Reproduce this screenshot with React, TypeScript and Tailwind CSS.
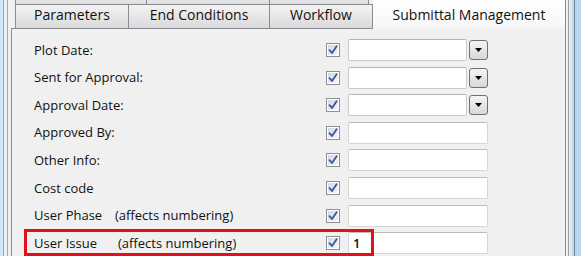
import React from "react";

const font = { fontFamily: '"Open Sans", "Noto Sans", sans-serif' };

function Check() {
  return (
    <div className="w-[14px] h-[14px] border border-[#8e8f8f] bg-white p-[1px] shrink-0">
      <div className="w-full h-full bg-gradient-to-br from-[#cfd8e6] to-[#f4f6fa] flex items-center justify-center">
        <svg width="10" height="10" viewBox="0 0 10 10">
          <path d="M1.5 5.2 L4 8 L8.6 1.2" fill="none" stroke="#3d5496" strokeWidth="1.8" strokeLinecap="round" strokeLinejoin="round" />
        </svg>
      </div>
    </div>
  );
}

function DropBtn() {
  return (
    <div className="w-[19px] h-[20px] rounded-[3px] border border-[#707070] bg-gradient-to-b from-[#f4f4f4] to-[#d8d8d8] flex items-center justify-center shrink-0">
      <svg width="7" height="4" viewBox="0 0 7 4">
        <path d="M0 0 H7 L3.5 4 Z" fill="#000" />
      </svg>
    </div>
  );
}

type Row = { label: React.ReactNode; drop?: boolean; value?: string; h: string };

const rows: Row[] = [
  { label: "Plot Date:", drop: true, h: "h-[28px]" },
  { label: "Sent for Approval:", drop: true, h: "h-[27px]" },
  { label: "Approval Date:", drop: true, h: "h-[28px]" },
  { label: "Approved By:", h: "h-[27px]" },
  { label: "Other Info:", h: "h-[28px]" },
  { label: "Cost code", h: "h-[28px]" },
  {
    label: (
      <>
        <span className="inline-block w-[81px]">User Phase</span>
        <span>(affects numbering)</span>
      </>
    ),
    h: "h-[27px]",
  },
  {
    label: (
      <>
        <span className="inline-block w-[84px]">User Issue</span>
        <span>(affects numbering)</span>
      </>
    ),
    value: "1",
    h: "h-[28px]",
  },
];

export default function App() {
  return (
    <div className="relative w-[581px] h-[256px] overflow-hidden bg-[#f0f0f0] flex text-[#111]" style={font}>
      {/* left window frame */}
      <div className="flex h-full shrink-0">
        <div className="w-[3px] bg-[#d4e5f5]" />
        <div className="w-[1px] bg-[#8ea6c0]" />
        <div className="w-[3px] bg-[#eaf0f6]" />
        <div className="w-[1px] bg-[#a8a8a8]" />
        <div className="w-[3px] bg-[#f0f0f0]" />
      </div>

      {/* tab control */}
      <div className="flex flex-col w-[555px] h-full shrink-0">
        {/* tab strip */}
        <div className="relative h-[28px] shrink-0">
          {/* back row */}
          <div className="absolute left-0 top-0 h-[5px] w-[362px] flex">
            <div className="w-[4px]" />
            <div className="w-[132px] h-full border-x border-[#898c95] bg-gradient-to-b from-[#e6e6e6] to-[#dcdcdc]" />
            <div className="w-[123px] h-full border-r border-[#898c95] bg-gradient-to-b from-[#e6e6e6] to-[#dcdcdc]" />
            <div className="w-[99px] h-full border-r border-[#898c95] bg-gradient-to-b from-[#e6e6e6] to-[#dcdcdc]" />
          </div>
          <div className="absolute left-0 bottom-0 flex items-end text-[14px] leading-none">
            <div className="w-[4px]" />
            <div className="w-[114px] h-[24px] border border-b-0 border-[#898c95] bg-gradient-to-b from-[#f3f3f3] to-[#dadada] flex items-center justify-center pb-[3px]">
              Parameters
            </div>
            <div className="w-[141px] h-[24px] border-r border-t border-[#898c95] bg-gradient-to-b from-[#f3f3f3] to-[#dadada] flex items-center justify-center pb-[3px]">
              End Conditions
            </div>
            <div className="w-[103px] h-[24px] border-r border-t border-[#898c95] bg-gradient-to-b from-[#f3f3f3] to-[#dadada] flex items-center justify-center pb-[3px]">
              Workflow
            </div>
            <div className="relative z-10 w-[193px] h-[29px] -mb-[1px] border-r border-[#898c95] bg-gradient-to-b from-[#ffffff] to-[#f6f6f6] flex items-center justify-center pt-[2px] pb-[2px]">
              Submittal Management
            </div>
          </div>
        </div>

        {/* panel */}
        <div className="flex-1 border border-[#898c95] border-b-0 bg-[#f0f0f0] pl-[22px] pt-[7px]">
          {rows.map((r, i) => (
            <div key={i} className={`flex items-center ${r.h}`}>
              <div className="w-[292px] text-[13px] leading-none whitespace-nowrap shrink-0">{r.label}</div>
              <Check />
              <div className="w-[8px] shrink-0" />
              {r.drop ? (
                <>
                  <div className="w-[119px] h-[22px] bg-white border border-[#c9c9c9] border-t-[#b5b5b5] rounded-[2px] shrink-0" />
                  <div className="w-[2px] shrink-0" />
                  <DropBtn />
                </>
              ) : (
                <div className="w-[140px] h-[22px] bg-white border border-[#d5d5d5] border-t-[#bdbdbd] rounded-[2px] shrink-0 flex items-center pl-[4px] text-[13px] font-semibold leading-none">
                  {r.value}
                </div>
              )}
            </div>
          ))}
        </div>
      </div>

      {/* right window frame */}
      <div className="flex h-full shrink-0">
        <div className="w-[2px] bg-[#f0f0f0]" />
        <div className="w-[1px] bg-[#a0a0a0]" />
        <div className="w-[3px] bg-[#dbe9f6]" />
        <div className="w-[2px] bg-[#c2d6ea]" />
        <div className="w-[1px] bg-[#70849a]" />
        <div className="w-[6px] bg-[#bcd6ee]" />
      </div>

      {/* annotation highlight */}
      <div className="absolute left-[24px] top-[229px] w-[350px] h-[27px] border-[3px] border-[#e0111b] pointer-events-none" />
    </div>
  );
}
